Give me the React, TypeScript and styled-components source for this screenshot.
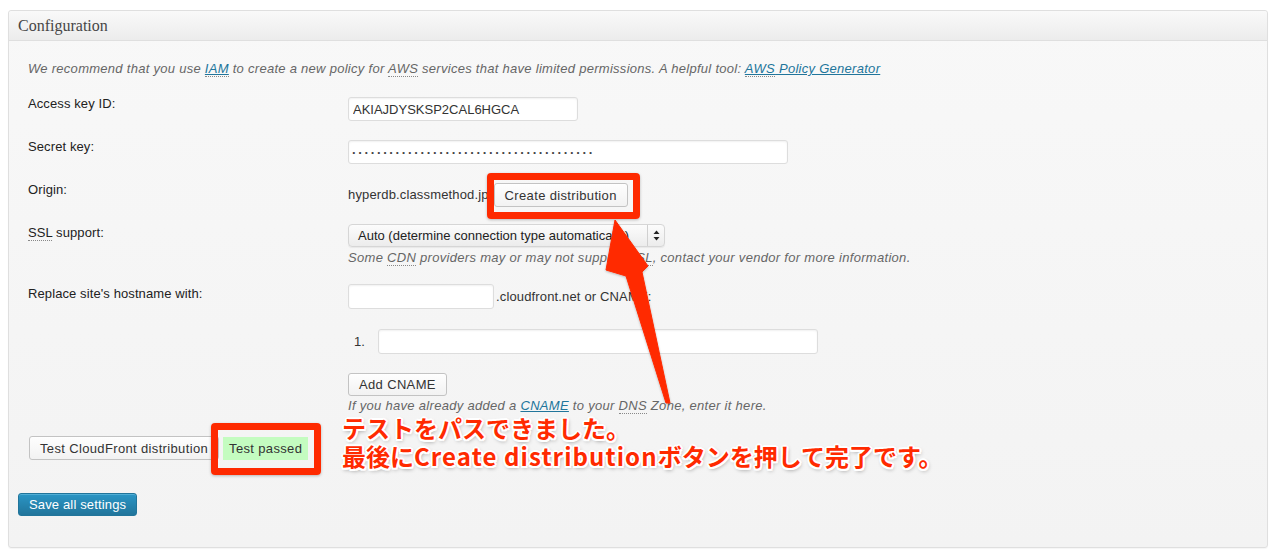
import React from "react";
import styled, { createGlobalStyle } from "styled-components";

const Global = createGlobalStyle`
  html, body { margin: 0; padding: 0; background: #fff; }
  body { font-family: "Liberation Sans", Arial, sans-serif; font-size: 13px; color: #333; }
  * { box-sizing: border-box; }
`;

const Page = styled.div`
  position: relative;
  width: 1277px;
  height: 555px;
  padding: 10px 9px 0 8px;
  overflow: hidden;
`;

const Panel = styled.div`
  border: 1px solid #dfdfdf;
  border-radius: 3px;
  background: linear-gradient(#f8f8f8, #f3f3f3);
  height: 538px;
  box-shadow: 0 1px 1px rgba(0, 0, 0, 0.04);
`;

const Header = styled.div`
  height: 30px;
  border-bottom: 1px solid #dfdfdf;
  background: linear-gradient(#f9f9f9, #ececec);
  padding: 0 9px;
  display: flex;
  align-items: center;
  font-family: "Liberation Serif", Georgia, serif;
  font-size: 16px;
  color: #464646;
  border-radius: 3px 3px 0 0;
`;

const Body = styled.div`
  padding: 0 9px 30px;
`;

const Section = styled.div`
  padding-left: 10px;
`;

const Intro = styled.p`
  margin: 19px 0 0;
  line-height: 18px;
  font-style: italic;
  color: #666;
  font-size: 13px;
  letter-spacing: 0.28px;
`;

const Link = styled.a`
  color: #21759b;
  text-decoration: underline;
`;

const Abbr = styled.abbr`
  text-decoration: none;
  border-bottom: 1px dotted #888;
`;

const Form = styled.div`
  margin-top: 16px;
  display: flex;
  flex-direction: column;
  gap: 16px;
`;

const Row = styled.div`
  display: grid;
  grid-template-columns: 320px 1fr;
  align-items: start;
`;

const Label = styled.div`
  line-height: 20px;
  color: #222;
  letter-spacing: 0.1px;
`;

const Field = styled.div<{ $pt?: number }>`
  padding-top: ${(p) => p.$pt ?? 3}px;
  display: flex;
  flex-direction: column;
  align-items: flex-start;
`;

const Inline = styled.div`
  display: flex;
  align-items: center;
`;

const TextInput = styled.input<{ $w: number; $h?: number }>`
  width: ${(p) => p.$w}px;
  height: ${(p) => p.$h ?? 24}px;
  border: 1px solid #dddddd;
  border-radius: 3px;
  background: #fff;
  box-shadow: inset 0 1px 2px rgba(0, 0, 0, 0.06);
  padding: 0 4px;
  font-family: "Liberation Sans", Arial, sans-serif;
  font-size: 13px;
  color: #333;
  outline: none;
`;

const SecretInput = styled(TextInput)`
  letter-spacing: 1.9px;
  font-weight: 700;
  color: #444;
  padding-left: 3px;
`;

const Button = styled.button<{ $h?: number }>`
  height: ${(p) => p.$h ?? 24}px;
  padding: 0 10px;
  border: 1px solid #c3c3c3;
  border-radius: 3px;
  background: linear-gradient(#fefefe, #f2f2f2);
  font-family: "Liberation Sans", Arial, sans-serif;
  font-size: 13px;
  letter-spacing: 0.35px;
  color: #333;
  white-space: nowrap;
  box-shadow: 0 1px 0 rgba(255, 255, 255, 0.6) inset;
`;

const PrimaryButton = styled(Button)`
  border-color: #21759b;
  background: linear-gradient(#2a95c5, #21759b);
  color: #fff;
  letter-spacing: 0.15px;
  box-shadow: inset 0 1px 0 rgba(120, 200, 230, 0.5);
`;

const OriginText = styled.span`
  line-height: 20px;
  margin-right: 5px;
  letter-spacing: 0.15px;
`;

const Select = styled.div`
  width: 317px;
  height: 23px;
  display: flex;
  border: 1px solid #d6d6d6;
  border-radius: 4px;
  background: linear-gradient(#fcfcfc, #ececec);
  box-shadow: 0 1px 1px rgba(0, 0, 0, 0.06);
`;

const SelectText = styled.div`
  flex: 1;
  padding-left: 9px;
  line-height: 21px;
  color: #222;
  white-space: nowrap;
  overflow: hidden;
`;

const SelectArrow = styled.div`
  width: 17px;
  border-left: 1px solid #d0d0d0;
  display: flex;
  align-items: center;
  justify-content: center;
`;

const Help = styled.div<{ $mt?: number; $mb?: number }>`
  margin-top: ${(p) => p.$mt ?? 1}px;
  margin-bottom: ${(p) => p.$mb ?? 0}px;
  line-height: 17px;
  font-style: italic;
  color: #666;
  white-space: nowrap;
  letter-spacing: 0.3px;
`;

const Suffix = styled.span`
  margin-left: 2px;
  color: #333;
  letter-spacing: 0.15px;
`;

const CnameItem = styled.div`
  margin-top: 20px;
  display: flex;
  align-items: center;
`;

const Num = styled.span`
  width: 30px;
  padding-left: 6px;
  color: #333;
`;

const Spaced = styled.div`
  margin-top: 19px;
`;

const TestRow = styled.div`
  margin-top: 22px;
  padding-left: 1px;
  display: flex;
  align-items: center;
  gap: 4px;
`;

const Passed = styled.span`
  height: 23px;
  line-height: 23px;
  padding: 0 6px;
  background: #c4fcc0;
  color: #333;
  letter-spacing: 0.35px;
`;

const SaveRow = styled.div`
  margin-top: 33px;
`;

const RedBox = styled.div<{ $x: number; $y: number; $w: number; $h: number }>`
  position: absolute;
  left: ${(p) => p.$x}px;
  top: ${(p) => p.$y}px;
  width: ${(p) => p.$w}px;
  height: ${(p) => p.$h}px;
  border: 7px solid #fe2a00;
  border-radius: 4px;
  box-shadow: 0 1px 3px rgba(0, 0, 0, 0.25);
  pointer-events: none;
`;

const Note = styled.div`
  position: absolute;
  left: 342px;
  top: 414px;
  font-family: "Noto Sans CJK JP", sans-serif;
  font-weight: 700;
  font-size: 24px;
  line-height: 28px;
  color: #ff2a00;
  white-space: nowrap;
  text-shadow:
    2px 0 0 #fff, -2px 0 0 #fff, 0 2px 0 #fff, 0 -2px 0 #fff,
    1.5px 1.5px 0 #fff, -1.5px 1.5px 0 #fff, 1.5px -1.5px 0 #fff, -1.5px -1.5px 0 #fff,
    1px 2px 4px rgba(0, 0, 0, 0.45);
`;

const Latin = styled.span`
  letter-spacing: 1.1px;
`;

const Overlay = styled.svg`
  position: absolute;
  left: 0;
  top: 0;
  pointer-events: none;
`;

export default function App() {
  return (
    <Page>
      <Global />
      <Panel>
        <Header>Configuration</Header>
        <Body>
          <Section>
            <Intro>
              We recommend that you use <Link href="#"><Abbr>IAM</Abbr></Link> to create a new policy for{" "}
              <Abbr>AWS</Abbr> services that have limited permissions. A helpful tool:{" "}
              <Link href="#"><Abbr>AWS</Abbr> Policy Generator</Link>
            </Intro>
            <Form>
              <Row>
                <Label>Access key ID:</Label>
                <Field>
                  <TextInput $w={230} defaultValue="AKIAJDYSKSP2CAL6HGCA" />
                </Field>
              </Row>
              <Row>
                <Label>Secret key:</Label>
                <Field>
                  <SecretInput $w={440} defaultValue={"·".repeat(39)} />
                </Field>
              </Row>
              <Row>
                <Label>Origin:</Label>
                <Field>
                  <Inline>
                    <OriginText>hyperdb.classmethod.jp</OriginText>
                    <Button>Create distribution</Button>
                  </Inline>
                </Field>
              </Row>
              <Row>
                <Label>
                  <Abbr>SSL</Abbr> support:
                </Label>
                <Field $pt={1}>
                  <Select>
                    <SelectText>Auto (determine connection type automatically)</SelectText>
                    <SelectArrow>
                      <svg width="7" height="11" viewBox="0 0 7 11">
                        <path d="M3.5 0.5 L6.5 4 L0.5 4 Z" fill="#222" />
                        <path d="M3.5 10.5 L6.5 7 L0.5 7 Z" fill="#222" />
                      </svg>
                    </SelectArrow>
                  </Select>
                  <Help $mt={2} $mb={2}>
                    Some <Abbr>CDN</Abbr> providers may or may not support <Abbr>SSL</Abbr>, contact your vendor for
                    more information.
                  </Help>
                </Field>
              </Row>
              <Row>
                <Label>Replace site's hostname with:</Label>
                <Field $pt={0}>
                  <Inline>
                    <TextInput $w={146} $h={25} defaultValue="" />
                    <Suffix>.cloudfront.net or CNAME:</Suffix>
                  </Inline>
                  <CnameItem>
                    <Num>1.</Num>
                    <TextInput $w={440} $h={25} defaultValue="" />
                  </CnameItem>
                  <Spaced>
                    <Button $h={23}>Add CNAME</Button>
                  </Spaced>
                  <Help>
                    If you have already added a <Link href="#">CNAME</Link> to your <Abbr>DNS</Abbr> Zone, enter it
                    here.
                  </Help>
                </Field>
              </Row>
            </Form>
            <TestRow>
              <Button>Test CloudFront distribution</Button>
              <Passed>Test passed</Passed>
            </TestRow>
          </Section>
          <SaveRow>
            <PrimaryButton $h={23}>Save all settings</PrimaryButton>
          </SaveRow>
        </Body>
      </Panel>

      <RedBox $x={487} $y={173} $w={153} $h={46} />
      <RedBox $x={211} $y={423} $w={110} $h={52} />

      <Overlay width="1277" height="555" viewBox="0 0 1277 555">
        <defs>
          <filter id="sh" x="-20%" y="-20%" width="140%" height="140%">
            <feDropShadow dx="0" dy="1" stdDeviation="1" floodColor="#000" floodOpacity="0.25" />
          </filter>
        </defs>
        <polygon
          points="615,220 648,266 642,272 670,403 666,403 626,276 606,270"
          fill="#ff2a00"
          stroke="#ff2a00"
          strokeWidth="1"
          strokeLinejoin="round"
          filter="url(#sh)"
        />
      </Overlay>

      <Note>
        テストをパスできました。
        <br />
        最後に<Latin>Create distribution</Latin>ボタンを押して完了です。
      </Note>
    </Page>
  );
}
